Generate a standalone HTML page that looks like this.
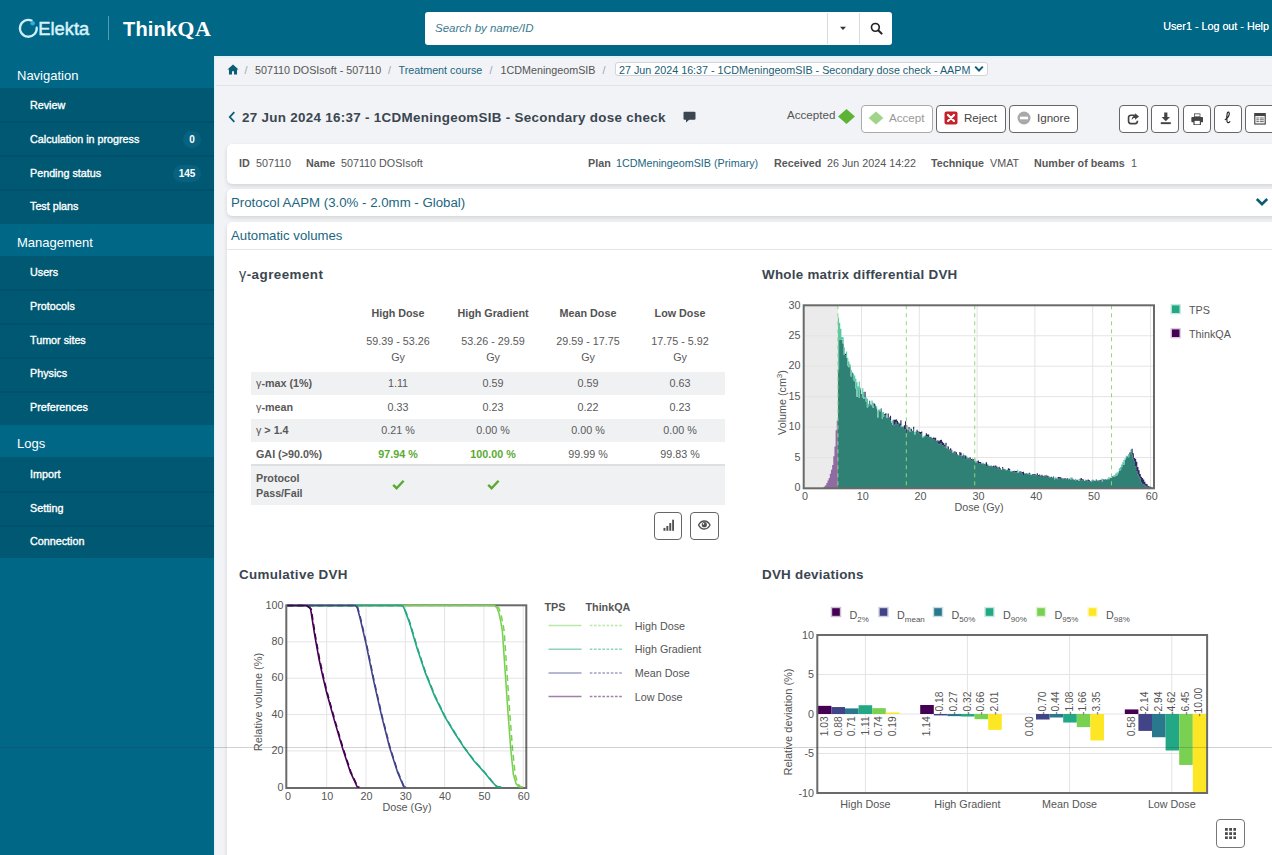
<!DOCTYPE html>
<html lang="en">
<head>
<meta charset="utf-8">
<title>ThinkQA</title>
<style>
*{box-sizing:border-box;margin:0;padding:0}
html,body{width:1272px;height:855px;overflow:hidden;background:#f1f3f6;font-family:"Liberation Sans",sans-serif;}
body{position:relative;color:#444}
.abs{position:absolute}
#hdr{position:absolute;left:0;top:0;width:1272px;height:56px;background:#006787}
#side{position:absolute;left:0;top:56px;width:215px;height:799px;background:#006787}
#main{position:absolute;left:214px;top:55.5px;width:1058px;height:800px;background:#f1f3f6;border-top:2px solid #e1f1f7;border-left:1px solid #dcf1f8}
.sec{position:absolute;left:17px;color:#fff;font-size:13px;line-height:16px;white-space:nowrap}
.grp{position:absolute;left:0;width:214px;background:#005873}
.it{position:absolute;left:30px;color:#fff;font-size:10.75px;line-height:14px;white-space:nowrap;-webkit-text-stroke:.35px #fff}
.sep{position:absolute;left:0;width:214px;height:2px;background:rgba(0,0,0,.06)}
.badge{position:absolute;height:17px;border-radius:9px;background:#07627f;color:#fff;font-size:10px;font-weight:bold;line-height:17px;text-align:center}
.t{position:absolute;white-space:nowrap;line-height:1}
.card{position:absolute;background:#fff;border-radius:5px;box-shadow:0 2px 4px rgba(0,0,0,.13)}
.btn{position:absolute;height:27.5px;border:1px solid #666;border-radius:4px;background:#fff}
.lbl{font-weight:bold;color:#585858}
.val{color:#555}
.link{color:#1a6680}
table{border-collapse:collapse}
</style>
</head>
<body>
<div id="hdr">
  <!-- Elekta logo -->
  <svg class="abs" style="left:18px;top:16px" width="78" height="26" viewBox="0 0 78 26">
    <path d="M13.6 4.6 A8.4 8.4 0 1 0 18.7 11.6" fill="none" stroke="#cdeef8" stroke-width="2.3" stroke-linecap="round"/>
    <circle cx="14.7" cy="7.3" r="2.3" fill="#2aaedb"/>
    <text x="20.2" y="18.5" font-family="Liberation Sans, sans-serif" font-size="17.6" fill="#d9f2fa" stroke="#d9f2fa" stroke-width=".45" textLength="51" lengthAdjust="spacingAndGlyphs">Elekta</text>
  </svg>
  <div class="abs" style="left:108px;top:16px;width:1px;height:24px;background:#5a9db0"></div>
  <div class="t" style="left:123px;top:17.5px;font-size:20px;font-weight:bold;color:#fff;letter-spacing:.2px">Think<span style="font-family:'Liberation Serif',serif;font-size:22px;letter-spacing:.5px">QA</span></div>
  <!-- search -->
  <div class="abs" style="left:425px;top:12px;width:467px;height:33px;background:#fff;border-radius:3px"></div>
  <div class="t" style="left:435px;top:23px;font-size:11.5px;font-style:italic;color:#3b7a90">Search by name/ID</div>
  <div class="abs" style="left:827px;top:13px;width:1px;height:31px;background:#d5dde1"></div>
  <div class="abs" style="left:859px;top:13px;width:1px;height:31px;background:#d5dde1"></div>
  <svg class="abs" style="left:839px;top:26px" width="8" height="5" viewBox="0 0 8 5"><path d="M1 .8h6L4 4z" fill="#333"/></svg>
  <svg class="abs" style="left:869.5px;top:21.5px" width="13" height="13" viewBox="0 0 15 15"><circle cx="6.2" cy="6.2" r="4.5" fill="none" stroke="#222" stroke-width="1.9"/><path d="M9.8 9.8l3.6 3.6" stroke="#222" stroke-width="2.4" stroke-linecap="round"/></svg>
  <div class="t" style="right:3px;top:21px;font-size:10.75px;color:#fff;text-shadow:0 0 .5px rgba(255,255,255,.8)">User1 - Log out - Help</div>
</div>

<div id="side">
  <div class="sec" style="top:11.7px">Navigation</div>
  <div class="grp" style="top:32px;height:136px"></div>
  <div class="sep" style="top:65px"></div><div class="sep" style="top:99px"></div><div class="sep" style="top:133px"></div>
  <div class="it" style="top:41.7px">Review</div>
  <div class="it" style="top:75.7px">Calculation in progress</div>
  <div class="it" style="top:109.7px">Pending status</div>
  <div class="it" style="top:142.7px">Test plans</div>
  <div class="badge" style="left:183px;top:75px;width:18px">0</div>
  <div class="badge" style="left:173px;top:109px;width:28px">145</div>

  <div class="sec" style="top:179.2px">Management</div>
  <div class="grp" style="top:200px;height:169px"></div>
  <div class="sep" style="top:233px"></div><div class="sep" style="top:267px"></div><div class="sep" style="top:301px"></div><div class="sep" style="top:335px"></div>
  <div class="it" style="top:209.2px">Users</div>
  <div class="it" style="top:243.2px">Protocols</div>
  <div class="it" style="top:277.2px">Tumor sites</div>
  <div class="it" style="top:310.2px">Physics</div>
  <div class="it" style="top:344.2px">Preferences</div>

  <div class="sec" style="top:379.8px">Logs</div>
  <div class="grp" style="top:401px;height:101px"></div>
  <div class="sep" style="top:435px"></div><div class="sep" style="top:469px"></div>
  <div class="it" style="top:410.8px">Import</div>
  <div class="it" style="top:444.8px">Setting</div>
  <div class="it" style="top:477.8px">Connection</div>
</div>

<div id="main"></div>

<!-- breadcrumb (absolute page coords) -->
<div class="abs" style="left:216px;top:85px;width:1056px;height:1px;background:#dfe4e8"></div>
<svg class="abs" style="left:227px;top:63.5px" width="12" height="11" viewBox="0 0 13 12"><path d="M6.5 .6 L.4 6h1.7v5.4h3.3V7.8h2.2v3.6h3.3V6h1.7z" fill="#0b5c75"/></svg>
<div class="t bc" style="left:244.5px;top:64.6px;font-size:10.75px;color:#9aa5ad">/</div>
<div class="t bc" style="left:255px;top:64.6px;font-size:10.75px;color:#555">507110 DOSIsoft - 507110</div>
<div class="t bc" style="left:388px;top:64.6px;font-size:10.75px;color:#9aa5ad">/</div>
<div class="t bc" style="left:398.5px;top:64.6px;font-size:10.75px;color:#1a6680">Treatment course</div>
<div class="t bc" style="left:489.5px;top:64.6px;font-size:10.75px;color:#9aa5ad">/</div>
<div class="t bc" style="left:500.5px;top:64.6px;font-size:10.75px;color:#555">1CDMeningeomSIB</div>
<div class="t bc" style="left:602.5px;top:64.6px;font-size:10.75px;color:#9aa5ad">/</div>
<div class="abs" style="left:615px;top:62px;width:373px;height:14px;background:#fff;border:1px solid #cfd5da;border-radius:3px"></div>
<div class="t" style="left:619px;top:64.6px;font-size:10.75px;color:#1a5d75">27 Jun 2024 16:37 - 1CDMeningeomSIB - Secondary dose check - AAPM</div>
<svg class="abs" style="left:974px;top:65px" width="10" height="8" viewBox="0 0 10 8"><path d="M1.2 1.6L5 5.6 8.8 1.6" fill="none" stroke="#0b5c75" stroke-width="2"/></svg>

<!-- title row -->
<svg class="abs" style="left:228px;top:111px" width="8" height="12" viewBox="0 0 8 12"><path d="M6.3 1.2L1.8 6l4.5 4.8" fill="none" stroke="#0b5c75" stroke-width="1.8"/></svg>
<div class="t" id="ttl" style="left:242px;top:111px;font-size:13.4px;font-weight:bold;color:#3b4650;letter-spacing:.3px">27 Jun 2024 16:37 - 1CDMeningeomSIB - Secondary dose check</div>
<svg class="abs" style="left:683px;top:111px" width="13" height="12" viewBox="0 0 13 12"><path d="M1.5 .8h10a1 1 0 0 1 1 1v6a1 1 0 0 1-1 1H6.2L3 11.4V8.8H1.5a1 1 0 0 1-1-1v-6a1 1 0 0 1 1-1z" fill="#3b4650"/></svg>

<div class="t" style="left:787px;top:109.3px;font-size:11.6px;color:#555">Accepted</div>
<svg class="abs" style="left:836.5px;top:107.5px" width="19" height="17" viewBox="0 0 18 16"><path d="M9 .8L17 8 9 15.2 1 8z" fill="#5cb336"/></svg>

<div class="btn" style="left:861px;top:105px;width:72px;border-color:#aaa"></div>
<svg class="abs" style="left:868px;top:111px" width="16" height="14" viewBox="0 0 16 14"><path d="M8 .6L15.4 7 8 13.4 .6 7z" fill="#9fd48a"/></svg>
<div class="t" style="left:889px;top:112px;font-size:11.6px;color:#999">Accept</div>

<div class="btn" style="left:936px;top:105px;width:70px"></div>
<svg class="abs" style="left:944px;top:111px" width="14" height="14" viewBox="0 0 14 14"><rect x=".5" y=".5" width="13" height="13" rx="2" fill="#c8202a"/><path d="M4 4l6 6M10 4l-6 6" stroke="#fff" stroke-width="2.2" stroke-linecap="round"/></svg>
<div class="t" style="left:964px;top:112px;font-size:11.6px;color:#444">Reject</div>

<div class="btn" style="left:1009px;top:105px;width:69px"></div>
<svg class="abs" style="left:1017px;top:111px" width="14" height="14" viewBox="0 0 14 14"><circle cx="7" cy="7" r="6.5" fill="#a9a9a9"/><rect x="3" y="5.7" width="8" height="2.6" fill="#fff"/></svg>
<div class="t" style="left:1037px;top:112px;font-size:11.6px;color:#444">Ignore</div>

<!-- right icon buttons -->
<div class="btn" style="left:1119px;top:105px;width:29px"></div>
<svg class="abs" style="left:1127px;top:113px" width="13" height="12.2" viewBox="0 0 15 14"><path d="M9.2 2.6H4.4a2.6 2.6 0 0 0-2.6 2.6v4.4a2.6 2.6 0 0 0 2.6 2.6h5a2.6 2.6 0 0 0 2.6-2.6V9" fill="none" stroke="#444" stroke-width="1.9"/><path d="M9.3 .4l4.6 3.7-4.6 3.7V5.6C7.4 5.6 6.2 6.3 5.4 8c0-2.9 1.4-4.9 3.9-5.2z" fill="#444"/></svg>
<div class="btn" style="left:1151px;top:105px;width:28px"></div>
<svg class="abs" style="left:1159.6px;top:112.3px" width="11.6" height="13.2" viewBox="0 0 13 15"><path d="M4.7 .6h3.6v5h3L6.5 10.6 1.7 5.6h3z" fill="#444"/><rect x=".8" y="11.6" width="11.4" height="2.2" fill="#444"/></svg>
<div class="btn" style="left:1183px;top:105px;width:28px"></div>
<svg class="abs" style="left:1190.8px;top:112.8px" width="12.4" height="12.4" viewBox="0 0 14 14"><rect x="3.4" y=".5" width="7.2" height="4.4" fill="#444"/><rect x=".4" y="4.4" width="13.2" height="6" rx="1" fill="#444"/><rect x="3.4" y="8.2" width="7.2" height="5.2" fill="#fff" stroke="#444" stroke-width="1.3"/><rect x="4.2" y="1.4" width="5.6" height="2.4" fill="#fff"/></svg>
<div class="btn" style="left:1214px;top:105px;width:28px"></div>
<svg class="abs" style="left:1224px;top:111px" width="8" height="14" viewBox="0 0 8 14"><path d="M1.2 8.6C4 6.6 5.6 3.8 5.2 2 4.9 .7 3.6 .9 3.2 2.4 2.7 4.6 2.6 8.2 3 10.4c.3 1.6 1.6 1.7 2.9 .2" fill="none" stroke="#222" stroke-width="1.1" stroke-linecap="round"/></svg>
<div class="btn" style="left:1245px;top:105px;width:40px"></div>
<svg class="abs" style="left:1253.8px;top:113.2px" width="12" height="11.6" viewBox="0 0 14 14"><rect x=".7" y=".7" width="12.6" height="12.6" fill="#fff" stroke="#444" stroke-width="1.4"/><rect x=".7" y=".7" width="12.6" height="3" fill="#444"/><path d="M2.6 6h3M6.6 6h5M2.6 8.2h3M6.6 8.2h5M2.6 10.4h3M6.6 10.4h5" stroke="#666" stroke-width="1.2"/></svg>

<!-- info card -->
<div class="card" style="left:226.5px;top:144px;width:1060px;height:39.5px"></div>
<div class="t lbl" style="left:239px;top:158px;font-size:10.75px">ID</div>
<div class="t val" style="left:256px;top:158px;font-size:10.75px">507110</div>
<div class="t lbl" style="left:306px;top:158px;font-size:10.75px">Name</div>
<div class="t val" style="left:341px;top:158px;font-size:10.75px">507110 DOSIsoft</div>
<div class="t lbl" style="left:588px;top:158px;font-size:10.75px">Plan</div>
<div class="t link" style="left:616px;top:158px;font-size:10.75px">1CDMeningeomSIB (Primary)</div>
<div class="t lbl" style="left:774px;top:158px;font-size:10.75px">Received</div>
<div class="t val" style="left:827px;top:158px;font-size:10.75px">26 Jun 2024 14:22</div>
<div class="t lbl" style="left:931px;top:158px;font-size:10.75px">Technique</div>
<div class="t val" style="left:990px;top:158px;font-size:10.75px">VMAT</div>
<div class="t lbl" style="left:1034px;top:158px;font-size:10.75px">Number of beams</div>
<div class="t val" style="left:1131px;top:158px;font-size:10.75px">1</div>

<!-- protocol card -->
<div class="card" style="left:226.5px;top:189px;width:1060px;height:27px"></div>
<div class="t link" style="left:231px;top:196px;font-size:13.25px">Protocol AAPM (3.0% - 2.0mm - Global)</div>
<svg class="abs" style="left:1255px;top:197px" width="14" height="10" viewBox="0 0 14 10"><path d="M1.8 2L7 7.2 12.2 2" fill="none" stroke="#0b5c75" stroke-width="2.6"/></svg>

<!-- automatic volumes card -->
<div class="card" style="left:226.5px;top:222px;width:1060px;height:650px"></div>
<div class="t link" style="left:231px;top:229px;font-size:13.2px">Automatic volumes</div>
<div class="abs" style="left:226.5px;top:249px;width:1046px;height:1px;background:#e3e6e9"></div>
<!-- section titles -->
<div class="t ttl" style="left:239px;top:267px;font-size:13.4px;font-weight:bold;color:#3b4650;letter-spacing:.45px"><span style="font-weight:normal;font-size:14.5px">&#947;</span>-agreement</div>
<div class="t ttl" style="left:762px;top:268px;font-size:13.4px;font-weight:bold;color:#3b4650;letter-spacing:.25px">Whole matrix differential DVH</div>
<div class="t ttl" style="left:239px;top:568px;font-size:13.4px;font-weight:bold;color:#3b4650;letter-spacing:.33px">Cumulative DVH</div>
<div class="t ttl" style="left:762px;top:568px;font-size:13.4px;font-weight:bold;color:#3b4650;letter-spacing:.25px">DVH deviations</div>

<!-- gamma table -->
<style>
.gt{position:absolute;left:251px;top:300px;width:474px;font-size:10.75px;color:#5a5a5a}
.gt .row{position:absolute;left:0;width:474px}
.gt .c{position:absolute;width:96px;text-align:center;white-space:nowrap;line-height:13px}
.gt .l{position:absolute;left:5px;white-space:nowrap;line-height:13px;font-weight:bold;color:#585858}
.c1{left:99px}.c2{left:194px}.c3{left:289px}.c4{left:381px}
.hd{font-weight:bold;color:#525252}
.g{color:#5aaa32;font-weight:bold}
</style>
<div class="gt">
  <div class="row" style="top:72px;height:23px;background:#f0f1f3"></div>
  <div class="row" style="top:119px;height:23px;background:#f0f1f3"></div>
  <div class="row" style="top:164px;height:41px;background:#f0f1f3;border-top:2px solid #dddfe2"></div>

  <div class="c c1 hd" style="top:7px">High Dose</div>
  <div class="c c2 hd" style="top:7px">High Gradient</div>
  <div class="c c3 hd" style="top:7px">Mean Dose</div>
  <div class="c c4 hd" style="top:7px">Low Dose</div>

  <div class="c c1" style="top:35px">59.39 - 53.26</div><div class="c c1" style="top:51px">Gy</div>
  <div class="c c2" style="top:35px">53.26 - 29.59</div><div class="c c2" style="top:51px">Gy</div>
  <div class="c c3" style="top:35px">29.59 - 17.75</div><div class="c c3" style="top:51px">Gy</div>
  <div class="c c4" style="top:35px">17.75 - 5.92</div><div class="c c4" style="top:51px">Gy</div>

  <div class="l" style="top:77px"><span style="font-weight:normal">&#947;</span>-max (1%)</div>
  <div class="c c1" style="top:77px">1.11</div><div class="c c2" style="top:77px">0.59</div><div class="c c3" style="top:77px">0.59</div><div class="c c4" style="top:77px">0.63</div>

  <div class="l" style="top:101px"><span style="font-weight:normal">&#947;</span>-mean</div>
  <div class="c c1" style="top:101px">0.33</div><div class="c c2" style="top:101px">0.23</div><div class="c c3" style="top:101px">0.22</div><div class="c c4" style="top:101px">0.23</div>

  <div class="l" style="top:124px"><span style="font-weight:normal">&#947;</span> &gt; 1.4</div>
  <div class="c c1" style="top:124px">0.21 %</div><div class="c c2" style="top:124px">0.00 %</div><div class="c c3" style="top:124px">0.00 %</div><div class="c c4" style="top:124px">0.00 %</div>

  <div class="l" style="top:148px">GAI (&gt;90.0%)</div>
  <div class="c c1 g" style="top:148px">97.94 %</div><div class="c c2 g" style="top:148px">100.00 %</div><div class="c c3" style="top:148px">99.99 %</div><div class="c c4" style="top:148px">99.83 %</div>

  <div class="l" style="top:171.5px">Protocol</div>
  <div class="l" style="top:187px">Pass/Fail</div>
  <svg class="abs" style="left:141px;top:179px" width="13" height="11" viewBox="0 0 13 11"><path d="M1.2 5.8l3.4 3.4 7-7.4" fill="none" stroke="#5aaa32" stroke-width="2.4"/></svg>
  <svg class="abs" style="left:236px;top:179px" width="13" height="11" viewBox="0 0 13 11"><path d="M1.2 5.8l3.4 3.4 7-7.4" fill="none" stroke="#5aaa32" stroke-width="2.4"/></svg>
</div>

<!-- table buttons -->
<div class="btn" style="left:653.5px;top:512px;width:28.5px;height:28px"></div>
<svg class="abs" style="left:662.6px;top:519px" width="11.6" height="12" viewBox="0 0 12 12"><rect x=".5" y="9" width="2" height="3" fill="#505050"/><rect x="3.5" y="7" width="2" height="5" fill="#505050"/><rect x="6.5" y="4" width="2" height="8" fill="#505050"/><rect x="9.5" y=".5" width="2" height="11.5" fill="#505050"/></svg>
<div class="btn" style="left:690px;top:512px;width:29px;height:28px"></div>
<svg class="abs" style="left:698.4px;top:520px" width="12.6" height="10" viewBox="0 0 15 12"><path d="M.6 6C2.4 2.6 4.8 1.2 7.5 1.2S12.6 2.6 14.4 6C12.6 9.4 10.2 10.8 7.5 10.8S2.4 9.4 .6 6z" fill="#fff" stroke="#505050" stroke-width="1.6"/><circle cx="7.5" cy="5.6" r="3.1" fill="#505050"/><circle cx="6.5" cy="4.6" r="1" fill="#fff"/></svg>

<!-- grid button bottom-right -->
<div class="btn" style="left:1216px;top:819.4px;width:28.8px;height:28.3px;border-color:#777"></div>
<svg class="abs" style="left:1224.6px;top:827.9px" width="11.2" height="11.2" viewBox="0 0 12 12"><g fill="#4a4a4a"><rect x="0" y="0" width="3" height="3"/><rect x="4.5" y="0" width="3" height="3"/><rect x="9" y="0" width="3" height="3"/><rect x="0" y="4.5" width="3" height="3"/><rect x="4.5" y="4.5" width="3" height="3"/><rect x="9" y="4.5" width="3" height="3"/><rect x="0" y="9" width="3" height="3"/><rect x="4.5" y="9" width="3" height="3"/><rect x="9" y="9" width="3" height="3"/></g></svg>
<svg class="abs" style="left:0;top:0" width="1272" height="855" viewBox="0 0 1272 855">
<rect x="803.7" y="305.3" width="350.29999999999995" height="183.0" fill="#fff"/>
<rect x="803.7" y="305.3" width="34.22" height="183.0" fill="#ebebeb"/>
<line x1="861.5" y1="305.3" x2="861.5" y2="488.3" stroke="#e4e4e4" stroke-width="1"/>
<line x1="919.3" y1="305.3" x2="919.3" y2="488.3" stroke="#e4e4e4" stroke-width="1"/>
<line x1="977.1" y1="305.3" x2="977.1" y2="488.3" stroke="#e4e4e4" stroke-width="1"/>
<line x1="1034.9" y1="305.3" x2="1034.9" y2="488.3" stroke="#e4e4e4" stroke-width="1"/>
<line x1="1092.7" y1="305.3" x2="1092.7" y2="488.3" stroke="#e4e4e4" stroke-width="1"/>
<line x1="1150.5" y1="305.3" x2="1150.5" y2="488.3" stroke="#e4e4e4" stroke-width="1"/>
<line x1="803.7" y1="457.55" x2="1154.0" y2="457.55" stroke="#e4e4e4" stroke-width="1"/>
<line x1="803.7" y1="427.1" x2="1154.0" y2="427.1" stroke="#e4e4e4" stroke-width="1"/>
<line x1="803.7" y1="396.65" x2="1154.0" y2="396.65" stroke="#e4e4e4" stroke-width="1"/>
<line x1="803.7" y1="366.2" x2="1154.0" y2="366.2" stroke="#e4e4e4" stroke-width="1"/>
<line x1="803.7" y1="335.75" x2="1154.0" y2="335.75" stroke="#e4e4e4" stroke-width="1"/>
<path d="M837.92 488V369.6H839.07V488zM839.07 488V339.68H840.23V488zM840.23 488V340.11H841.39V488zM841.39 488V339.47H842.54V488zM842.54 488V343.61H843.7V488zM843.7 488V354.74H844.85V488zM844.85 488V355.33H846.01V488zM846.01 488V357.51H847.17V488zM847.17 488V365.82H848.32V488zM848.32 488V367.3H849.48V488zM849.48 488V366.24H850.63V488zM850.63 488V376.6H851.79V488zM851.79 488V372.82H852.95V488zM852.95 488V380.28H854.1V488zM854.1 488V381.37H855.26V488zM855.26 488V388.56H856.41V488zM856.41 488V397H857.57V488zM857.57 488V390.04H858.73V488zM858.73 488V398.1H859.88V488zM859.88 488V390.08H861.04V488zM861.04 488V394.53H862.19V488zM862.19 488V397.57H863.35V488zM863.35 488V398.68H864.51V488zM864.51 488V396.91H865.66V488zM865.66 488V401.5H866.82V488zM866.82 488V407.41H867.97V488zM867.97 488V406.36H869.13V488zM869.13 488V400.99H870.29V488zM870.29 488V404.52H871.44V488zM871.44 488V405.44H872.6V488zM872.6 488V407.67H873.75V488zM873.75 488V406.13H874.91V488zM874.91 488V405.48H876.07V488zM876.07 488V408.24H877.22V488zM877.22 488V417.43H878.38V488zM878.38 488V409.89H879.53V488zM879.53 488V411.16H880.69V488zM880.69 488V409.17H881.85V488zM881.85 488V418.67H883V488zM883 488V416.42H884.16V488zM884.16 488V414.9H885.31V488zM885.31 488V414.96H886.47V488zM886.47 488V418.26H887.63V488zM887.63 488V417.84H888.78V488zM888.78 488V417.34H889.94V488zM889.94 488V420.29H891.09V488zM891.09 488V422.71H892.25V488zM892.25 488V425.1H893.41V488zM893.41 488V425.39H894.56V488zM894.56 488V424.48H895.72V488zM895.72 488V421.95H896.87V488zM896.87 488V424.47H898.03V488zM898.03 488V422.98H899.19V488zM899.19 488V427.15H900.34V488zM900.34 488V425.33H901.5V488zM901.5 488V427.07H902.65V488zM902.65 488V426.7H903.81V488zM903.81 488V428.91H904.97V488zM904.97 488V429.61H906.12V488zM906.12 488V433.52H907.28V488zM907.28 488V429.79H908.43V488zM908.43 488V429.29H909.59V488zM909.59 488V431.58H910.75V488zM910.75 488V431.45H911.9V488zM911.9 488V430.8H913.06V488zM913.06 488V429.6H914.21V488zM914.21 488V434.46H915.37V488zM915.37 488V431.6H916.53V488zM916.53 488V431.89H917.68V488zM917.68 488V432.25H918.84V488zM918.84 488V433.15H919.99V488zM919.99 488V434.44H921.15V488zM921.15 488V433.02H922.31V488zM922.31 488V437.4H923.46V488zM923.46 488V436.55H924.62V488zM924.62 488V435.68H925.77V488zM925.77 488V436.04H926.93V488zM926.93 488V436.12H928.09V488zM928.09 488V437.49H929.24V488zM929.24 488V437.02H930.4V488zM930.4 488V437.03H931.55V488zM931.55 488V438.3H932.71V488zM932.71 488V439H933.87V488zM933.87 488V439.6H935.02V488zM935.02 488V440.63H936.18V488zM936.18 488V440.92H937.33V488zM937.33 488V443.67H938.49V488zM938.49 488V444.5H939.65V488zM939.65 488V443.75H940.8V488zM940.8 488V443.1H941.96V488zM941.96 488V445.26H943.11V488zM943.11 488V445.72H944.27V488zM944.27 488V447.55H945.43V488zM945.43 488V445.42H946.58V488zM946.58 488V448.31H947.74V488zM947.74 488V449.1H948.89V488zM948.89 488V450.5H950.05V488zM950.05 488V450.44H951.21V488zM951.21 488V450.53H952.36V488zM952.36 488V454.07H953.52V488zM953.52 488V452.85H954.67V488zM954.67 488V452.57H955.83V488zM955.83 488V454.09H956.99V488zM956.99 488V454.39H958.14V488zM958.14 488V455.33H959.3V488zM959.3 488V455.04H960.45V488zM960.45 488V455.62H961.61V488zM961.61 488V457.93H962.77V488zM962.77 488V455.03H963.92V488zM963.92 488V456.34H965.08V488zM965.08 488V459.19H966.23V488zM966.23 488V456.86H967.39V488zM967.39 488V458.27H968.55V488zM968.55 488V457.93H969.7V488zM969.7 488V459.57H970.86V488zM970.86 488V460.6H972.01V488zM972.01 488V459.6H973.17V488zM973.17 488V459.75H974.33V488zM974.33 488V460.88H975.48V488zM975.48 488V462.59H976.64V488zM976.64 488V461.36H977.79V488zM977.79 488V463.69H978.95V488zM978.95 488V463.53H980.11V488zM980.11 488V463.75H981.26V488zM981.26 488V463.8H982.42V488zM982.42 488V462.73H983.57V488zM983.57 488V464.75H984.73V488zM984.73 488V463.8H985.89V488zM985.89 488V466.02H987.04V488zM987.04 488V464.76H988.2V488zM988.2 488V466.11H989.35V488zM989.35 488V467.04H990.51V488zM990.51 488V465.5H991.67V488zM991.67 488V466.36H992.82V488zM992.82 488V467.09H993.98V488zM993.98 488V466.15H995.13V488zM995.13 488V467.75H996.29V488zM996.29 488V467.91H997.45V488zM997.45 488V467.97H998.6V488zM998.6 488V469.29H999.76V488zM999.76 488V468.48H1000.91V488zM1000.91 488V470H1002.07V488zM1002.07 488V468.56H1003.23V488zM1003.23 488V468.65H1004.38V488zM1004.38 488V470.01H1005.54V488zM1005.54 488V470.35H1006.69V488zM1006.69 488V469.82H1007.85V488zM1007.85 488V469.96H1009.01V488zM1009.01 488V470.35H1010.16V488zM1010.16 488V471.17H1011.32V488zM1011.32 488V471.53H1012.47V488zM1012.47 488V471.97H1013.63V488zM1013.63 488V471.45H1014.79V488zM1014.79 488V472.43H1015.94V488zM1015.94 488V472.46H1017.1V488zM1017.1 488V472.4H1018.25V488zM1018.25 488V472.56H1019.41V488zM1019.41 488V473.05H1020.57V488zM1020.57 488V471.64H1021.72V488zM1021.72 488V473.84H1022.88V488zM1022.88 488V475.06H1024.03V488zM1024.03 488V473.31H1025.19V488zM1025.19 488V473.67H1026.35V488zM1026.35 488V473.31H1027.5V488zM1027.5 488V474.29H1028.66V488zM1028.66 488V474.4H1029.81V488zM1029.81 488V474.42H1030.97V488zM1030.97 488V475.02H1032.13V488zM1032.13 488V474.7H1033.28V488zM1033.28 488V475.27H1034.44V488zM1034.44 488V475.54H1035.59V488zM1035.59 488V475.04H1036.75V488zM1036.75 488V475.18H1037.91V488zM1037.91 488V475.89H1039.06V488zM1039.06 488V475.77H1040.22V488zM1040.22 488V475.45H1041.37V488zM1041.37 488V477.09H1042.53V488zM1042.53 488V476.96H1043.69V488zM1043.69 488V476.18H1044.84V488zM1044.84 488V475.56H1046V488zM1046 488V475.18H1047.15V488zM1047.15 488V476.98H1048.31V488zM1048.31 488V477.31H1049.47V488zM1049.47 488V477.37H1050.62V488zM1050.62 488V478.06H1051.78V488zM1051.78 488V477.83H1052.93V488zM1052.93 488V477.24H1054.09V488zM1054.09 488V479.37H1055.25V488zM1055.25 488V477.51H1056.4V488zM1056.4 488V478.85H1057.56V488zM1057.56 488V479.44H1058.71V488zM1058.71 488V478H1059.87V488zM1059.87 488V478.78H1061.03V488zM1061.03 488V477.97H1062.18V488zM1062.18 488V479.2H1063.34V488zM1063.34 488V478.31H1064.49V488zM1064.49 488V478.83H1065.65V488zM1065.65 488V479.27H1066.81V488zM1066.81 488V479.65H1067.96V488zM1067.96 488V479.28H1069.12V488zM1069.12 488V479.09H1070.27V488zM1070.27 488V479.57H1071.43V488zM1071.43 488V478.53H1072.59V488zM1072.59 488V479.73H1073.74V488zM1073.74 488V479.7H1074.9V488zM1074.9 488V480.23H1076.05V488zM1076.05 488V479.99H1077.21V488zM1077.21 488V479.72H1078.37V488zM1078.37 488V480.98H1079.52V488zM1079.52 488V479.58H1080.68V488zM1080.68 488V480.3H1081.83V488zM1081.83 488V480.34H1082.99V488zM1082.99 488V480.84H1084.15V488zM1084.15 488V480.99H1085.3V488zM1085.3 488V480.47H1086.46V488zM1086.46 488V480.26H1087.61V488zM1087.61 488V481.75H1088.77V488zM1088.77 488V480.63H1089.93V488zM1089.93 488V481.16H1091.08V488zM1091.08 488V481.51H1092.24V488zM1092.24 488V480.31H1093.39V488zM1093.39 488V480.53H1094.55V488zM1094.55 488V480.78H1095.71V488zM1095.71 488V479.91H1096.86V488zM1096.86 488V480.48H1098.02V488zM1098.02 488V481.5H1099.17V488zM1099.17 488V480.22H1100.33V488zM1100.33 488V481.9H1101.49V488zM1101.49 488V481.39H1102.64V488zM1102.64 488V479.87H1103.8V488zM1103.8 488V479.74H1104.95V488zM1104.95 488V479.68H1106.11V488zM1106.11 488V479.86H1107.27V488zM1107.27 488V479.02H1108.42V488zM1108.42 488V479.24H1109.58V488zM1109.58 488V477.92H1110.73V488zM1110.73 488V477.81H1111.89V488zM1111.89 488V477.43H1113.05V488zM1113.05 488V477.08H1114.2V488zM1114.2 488V476.58H1115.36V488zM1115.36 488V475.91H1116.51V488zM1116.51 488V475.16H1117.67V488zM1117.67 488V473.18H1118.83V488zM1118.83 488V471.12H1119.98V488zM1119.98 488V470.35H1121.14V488zM1121.14 488V467.15H1122.29V488zM1122.29 488V464.92H1123.45V488zM1123.45 488V464.57H1124.61V488zM1124.61 488V460.07H1125.76V488zM1125.76 488V457.46H1126.92V488zM1126.92 488V457.1H1128.07V488zM1128.07 488V457.26H1129.23V488zM1129.23 488V453.83H1130.39V488zM1130.39 488V451.82H1131.54V488zM1131.54 488V454.42H1132.7V488zM1132.7 488V458.68H1133.85V488zM1133.85 488V461.53H1135.01V488zM1135.01 488V466.3H1136.17V488zM1136.17 488V471.27H1137.32V488zM1137.32 488V474.59H1138.48V488zM1138.48 488V476.75H1139.63V488zM1139.63 488V478.53H1140.79V488zM1140.79 488V482.37H1141.95V488zM1141.95 488V483.76H1143.1V488zM1143.1 488V484.27H1144.26V488zM1144.26 488V485.14H1145.41V488zM1145.41 488V486.35H1146.57V488zM1146.57 488V486.82H1147.73V488zM1147.73 488V487.38H1148.88V488zM1148.88 488V487.63H1150.04V488zM1150.04 488V487.83H1151.19V488z" fill="#2f8176"/>
<path d="M837.92 369.6V317.48H839.07V369.6zM839.07 339.68V322.85H840.23V339.68zM840.23 340.11V328.68H841.39V340.11zM841.39 339.47V336.95H842.54V339.47zM842.54 343.61V337.34H843.7V343.61zM843.7 354.74V347.24H844.85V354.74zM846.01 357.51V351.61H847.17V357.51zM847.17 365.82V357.66H848.32V365.82zM848.32 367.3V361.61H849.48V367.3zM849.48 366.24V364.32H850.63V366.24zM850.63 376.6V369.77H851.79V376.6zM851.79 372.82V372.29H852.95V372.82zM852.95 380.28V373.57H854.1V380.28zM854.1 381.37V375.5H855.26V381.37zM855.26 388.56V378.78H856.41V388.56zM856.41 397V382.25H857.57V397zM857.57 390.04V386.46H858.73V390.04zM858.73 398.1V381.6H859.88V398.1zM859.88 390.08V387.63H861.04V390.08zM862.19 397.57V388.13H863.35V397.57zM863.35 398.68V392.03H864.51V398.68zM865.66 401.5V397.53H866.82V401.5zM866.82 407.41V398.63H867.97V407.41zM867.97 406.36V403.77H869.13V406.36zM869.13 400.99V400.47H870.29V400.99zM871.44 405.44V400.53H872.6V405.44zM872.6 407.67V402.43H873.75V407.67zM874.91 405.48V404.25H876.07V405.48zM876.07 408.24V406.23H877.22V408.24zM877.22 417.43V410.51H878.38V417.43zM878.38 409.89V409.38H879.53V409.89zM879.53 411.16V408.92H880.69V411.16zM881.85 418.67V412.19H883V418.67zM883 416.42V411.95H884.16V416.42zM888.78 417.34V417.13H889.94V417.34zM891.09 422.71V421.2H892.25V422.71zM892.25 425.1V419.71H893.41V425.1zM901.5 427.07V425.68H902.65V427.07zM902.65 426.7V426.51H903.81V426.7zM907.28 429.79V429.13H908.43V429.79zM909.59 431.58V428.33H910.75V431.58zM911.9 430.8V430.65H913.06V430.8zM914.21 434.46V432.09H915.37V434.46zM915.37 431.6V431.57H916.53V431.6zM922.31 437.4V436.47H923.46V437.4zM923.46 436.55V436.36H924.62V436.55zM924.62 435.68V434.93H925.77V435.68zM929.24 437.02V437.01H930.4V437.02zM930.4 437.03V436.38H931.55V437.03zM946.58 448.31V446.04H947.74V448.31zM958.14 455.33V455.09H959.3V455.33zM962.77 455.03V453.59H963.92V455.03zM966.23 456.86V456.23H967.39V456.86zM967.39 458.27V458.25H968.55V458.27zM968.55 457.93V457.12H969.7V457.93zM974.33 460.88V458.62H975.48V460.88zM975.48 462.59V460.87H976.64V462.59zM981.26 463.8V463.36H982.42V463.8zM982.42 462.73V462.69H983.57V462.73zM984.73 463.8V462.66H985.89V463.8zM988.2 466.11V464.75H989.35V466.11zM990.51 465.5V465.3H991.67V465.5zM991.67 466.36V466.3H992.82V466.36zM997.45 467.97V466.97H998.6V467.97zM1003.23 468.65V468.55H1004.38V468.65zM1005.54 470.35V469.76H1006.69V470.35zM1010.16 471.17V470.78H1011.32V471.17zM1011.32 471.53V470.72H1012.47V471.53zM1017.1 472.4V469.87H1018.25V472.4zM1018.25 472.56V471.74H1019.41V472.56zM1024.03 473.31V472.89H1025.19V473.31zM1029.81 474.42V473.29H1030.97V474.42zM1030.97 475.02V474.45H1032.13V475.02zM1035.59 475.04V474.41H1036.75V475.04zM1040.22 475.45V475.33H1041.37V475.45zM1046 475.18V474.69H1047.15V475.18zM1054.09 479.37V477.52H1055.25V479.37zM1055.25 477.51V477.39H1056.4V477.51zM1056.4 478.85V478.49H1057.56V478.85zM1061.03 477.97V477.6H1062.18V477.97zM1063.34 478.31V478.13H1064.49V478.31zM1067.96 479.28V478.52H1069.12V479.28zM1069.12 479.09V478.38H1070.27V479.09zM1070.27 479.57V477.61H1071.43V479.57zM1073.74 479.7V479.65H1074.9V479.7zM1074.9 480.23V478.66H1076.05V480.23zM1076.05 479.99V479.61H1077.21V479.99zM1077.21 479.72V479.71H1078.37V479.72zM1078.37 480.98V479.28H1079.52V480.98zM1084.15 480.99V480.85H1085.3V480.99zM1091.08 481.51V480.34H1092.24V481.51zM1094.55 480.78V480.78H1095.71V480.78zM1096.86 480.48V480.25H1098.02V480.48zM1101.49 481.39V478.57H1102.64V481.39zM1106.11 479.86V479.11H1107.27V479.86zM1107.27 479.02V478.54H1108.42V479.02zM1108.42 479.24V477.1H1109.58V479.24zM1109.58 477.92V477.67H1110.73V477.92zM1110.73 477.81V477.55H1111.89V477.81zM1113.05 477.08V475.43H1114.2V477.08zM1114.2 476.58V475.09H1115.36V476.58zM1115.36 475.91V473.14H1116.51V475.91zM1116.51 475.16V472.59H1117.67V475.16zM1117.67 473.18V471.77H1118.83V473.18zM1118.83 471.12V468.22H1119.98V471.12zM1119.98 470.35V467.04H1121.14V470.35zM1121.14 467.15V464.43H1122.29V467.15zM1122.29 464.92V462.31H1123.45V464.92zM1123.45 464.57V460.01H1124.61V464.57zM1124.61 460.07V458.29H1125.76V460.07zM1125.76 457.46V455.83H1126.92V457.46zM1126.92 457.1V455.86H1128.07V457.1zM1128.07 457.26V453.91H1129.23V457.26zM1130.39 451.82V449.38H1131.54V451.82z" fill="#5cc7a6"/>
<path d="M822.89 488V487.41H824.05V488zM824.05 488V486.42H825.2V488zM825.2 488V485.36H826.36V488zM826.36 488V482.91H827.51V488zM827.51 488V480.49H828.67V488zM828.67 488V478H829.83V488zM829.83 488V473.71H830.98V488zM830.98 488V469.66H832.14V488zM832.14 488V464.97H833.29V488zM833.29 488V456.28H834.45V488zM834.45 488V446.41H835.61V488zM835.61 488V430.13H836.76V488zM836.76 488V420.54H837.92V488z" fill="#8f6ba1"/>
<path d="M844.85 355.33V353.77H846.01V355.33zM861.04 394.53V393.94H862.19V394.53zM864.51 396.91V391.8H865.66V396.91zM870.29 404.52V404.45H871.44V404.52zM873.75 406.13V403.46H874.91V406.13zM880.69 409.17V408.53H881.85V409.17zM884.16 414.9V414.07H885.31V414.9zM885.31 414.96V413.31H886.47V414.96zM886.47 418.26V417.71H887.63V418.26zM887.63 417.84V413.5H888.78V417.84zM889.94 420.29V415.83H891.09V420.29zM893.41 425.39V419.82H894.56V425.39zM894.56 424.48V419.66H895.72V424.48zM895.72 421.95V419.3H896.87V421.95zM896.87 424.47V420.82H898.03V424.47zM898.03 422.98V422.51H899.19V422.98zM899.19 427.15V423.48H900.34V427.15zM900.34 425.33V420.17H901.5V425.33zM903.81 428.91V425.26H904.97V428.91zM904.97 429.61V421.22H906.12V429.61zM906.12 433.52V425.37H907.28V433.52zM908.43 429.29V427.11H909.59V429.29zM910.75 431.45V428.64H911.9V431.45zM913.06 429.6V426.86H914.21V429.6zM916.53 431.89V429.76H917.68V431.89zM917.68 432.25V431.41H918.84V432.25zM918.84 433.15V431.64H919.99V433.15zM919.99 434.44V432.01H921.15V434.44zM921.15 433.02V431.52H922.31V433.02zM925.77 436.04V433.19H926.93V436.04zM926.93 436.12V434.62H928.09V436.12zM928.09 437.49V434.6H929.24V437.49zM931.55 438.3V438H932.71V438.3zM932.71 439V437.47H933.87V439zM933.87 439.6V437.65H935.02V439.6zM935.02 440.63V437.65H936.18V440.63zM936.18 440.92V440.73H937.33V440.92zM937.33 443.67V440.34H938.49V443.67zM938.49 444.5V441.2H939.65V444.5zM939.65 443.75V440.05H940.8V443.75zM940.8 443.1V439.72H941.96V443.1zM941.96 445.26V441.86H943.11V445.26zM943.11 445.72V443.04H944.27V445.72zM944.27 447.55V444.69H945.43V447.55zM945.43 445.42V442.8H946.58V445.42zM947.74 449.1V446.47H948.89V449.1zM948.89 450.5V449.49H950.05V450.5zM950.05 450.44V448.25H951.21V450.44zM951.21 450.53V449.84H952.36V450.53zM952.36 454.07V452.84H953.52V454.07zM953.52 452.85V451.5H954.67V452.85zM954.67 452.57V451.53H955.83V452.57zM955.83 454.09V452.29H956.99V454.09zM956.99 454.39V454.26H958.14V454.39zM959.3 455.04V452.1H960.45V455.04zM960.45 455.62V452.81H961.61V455.62zM961.61 457.93V455.78H962.77V457.93zM963.92 456.34V455.56H965.08V456.34zM965.08 459.19V455.57H966.23V459.19zM969.7 459.57V457.47H970.86V459.57zM970.86 460.6V458.92H972.01V460.6zM972.01 459.6V458.7H973.17V459.6zM973.17 459.75V458.99H974.33V459.75zM976.64 461.36V461.01H977.79V461.36zM977.79 463.69V460.59H978.95V463.69zM978.95 463.53V462.06H980.11V463.53zM980.11 463.75V462.09H981.26V463.75zM983.57 464.75V464.02H984.73V464.75zM985.89 466.02V462.25H987.04V466.02zM987.04 464.76V464.57H988.2V464.76zM989.35 467.04V465.89H990.51V467.04zM992.82 467.09V465.84H993.98V467.09zM993.98 466.15V465.81H995.13V466.15zM995.13 467.75V465.58H996.29V467.75zM996.29 467.91V466.39H997.45V467.91zM998.6 469.29V466.81H999.76V469.29zM999.76 468.48V467.95H1000.91V468.48zM1000.91 470V469.68H1002.07V470zM1002.07 468.56V467.12H1003.23V468.56zM1004.38 470.01V469.37H1005.54V470.01zM1006.69 469.82V469.7H1007.85V469.82zM1007.85 469.96V468.2H1009.01V469.96zM1009.01 470.35V468.82H1010.16V470.35zM1012.47 471.97V470.95H1013.63V471.97zM1013.63 471.45V470.69H1014.79V471.45zM1014.79 472.43V470.91H1015.94V472.43zM1015.94 472.46V470.96H1017.1V472.46zM1019.41 473.05V471.32H1020.57V473.05zM1020.57 471.64V471.58H1021.72V471.64zM1021.72 473.84V471.93H1022.88V473.84zM1022.88 475.06V471.75H1024.03V475.06zM1025.19 473.67V473.45H1026.35V473.67zM1026.35 473.31V473.1H1027.5V473.31zM1027.5 474.29V473.97H1028.66V474.29zM1028.66 474.4V472.76H1029.81V474.4zM1032.13 474.7V474.01H1033.28V474.7zM1033.28 475.27V474.15H1034.44V475.27zM1034.44 475.54V473.91H1035.59V475.54zM1036.75 475.18V473.35H1037.91V475.18zM1037.91 475.89V474.91H1039.06V475.89zM1039.06 475.77V474.57H1040.22V475.77zM1041.37 477.09V474.8H1042.53V477.09zM1042.53 476.96V476.24H1043.69V476.96zM1043.69 476.18V475.44H1044.84V476.18zM1044.84 475.56V475.15H1046V475.56zM1047.15 476.98V475.69H1048.31V476.98zM1048.31 477.31V476.55H1049.47V477.31zM1049.47 477.37V477.13H1050.62V477.37zM1050.62 478.06V476.67H1051.78V478.06zM1051.78 477.83V477.42H1052.93V477.83zM1052.93 477.24V476.44H1054.09V477.24zM1057.56 479.44V477.01H1058.71V479.44zM1058.71 478V477.02H1059.87V478zM1059.87 478.78V477.36H1061.03V478.78zM1062.18 479.2V478.57H1063.34V479.2zM1064.49 478.83V478.04H1065.65V478.83zM1065.65 479.27V478.86H1066.81V479.27zM1066.81 479.65V478.29H1067.96V479.65zM1071.43 478.53V477.77H1072.59V478.53zM1072.59 479.73V479.34H1073.74V479.73zM1079.52 479.58V478.85H1080.68V479.58zM1080.68 480.3V478.03H1081.83V480.3zM1081.83 480.34V479.34H1082.99V480.34zM1082.99 480.84V479.41H1084.15V480.84zM1085.3 480.47V479.81H1086.46V480.47zM1086.46 480.26V479.99H1087.61V480.26zM1087.61 481.75V479.41H1088.77V481.75zM1088.77 480.63V480.03H1089.93V480.63zM1089.93 481.16V480.94H1091.08V481.16zM1092.24 480.31V479.73H1093.39V480.31zM1093.39 480.53V480.43H1094.55V480.53zM1095.71 479.91V479.46H1096.86V479.91zM1098.02 481.5V480.45H1099.17V481.5zM1099.17 480.22V480.05H1100.33V480.22zM1100.33 481.9V479.68H1101.49V481.9zM1102.64 479.87V479.31H1103.8V479.87zM1103.8 479.74V479.4H1104.95V479.74zM1104.95 479.68V479.16H1106.11V479.68zM1111.89 477.43V476.56H1113.05V477.43zM1129.23 453.83V452.62H1130.39V453.83zM1131.54 454.42V448.86H1132.7V454.42zM1132.7 458.68V453.26H1133.85V458.68zM1133.85 461.53V457.94H1135.01V461.53zM1135.01 466.3V458.7H1136.17V466.3zM1136.17 471.27V461.83H1137.32V471.27zM1137.32 474.59V467.11H1138.48V474.59zM1138.48 476.75V470.15H1139.63V476.75zM1139.63 478.53V473.93H1140.79V478.53zM1140.79 482.37V476.65H1141.95V482.37zM1141.95 483.76V478.08H1143.1V483.76zM1143.1 484.27V479.55H1144.26V484.27zM1144.26 485.14V481.63H1145.41V485.14zM1145.41 486.35V483.83H1146.57V486.35zM1146.57 486.82V484.22H1147.73V486.82zM1147.73 487.38V486.11H1148.88V487.38zM1148.88 487.63V486.38H1150.04V487.63zM1150.04 487.83V486.83H1151.19V487.83zM1151.19 488V487.49H1152.35V488z" fill="#2c2a60"/>
<line x1="837.92" y1="305.3" x2="837.92" y2="488.3" stroke="#8fd67a" stroke-width="1" stroke-dasharray="4 4"/>
<line x1="906.3" y1="305.3" x2="906.3" y2="488.3" stroke="#8fd67a" stroke-width="1" stroke-dasharray="4 4"/>
<line x1="974.73" y1="305.3" x2="974.73" y2="488.3" stroke="#8fd67a" stroke-width="1" stroke-dasharray="4 4"/>
<line x1="1111.54" y1="305.3" x2="1111.54" y2="488.3" stroke="#8fd67a" stroke-width="1" stroke-dasharray="4 4"/>
<rect x="803.7" y="305.3" width="350.29999999999995" height="183.0" fill="none" stroke="#6a6a6a" stroke-width="2"/>
<text x="805" y="499.5" font-size="10.75" fill="#555" text-anchor="middle" font-family="Liberation Sans, sans-serif">0</text>
<text x="862.8" y="499.5" font-size="10.75" fill="#555" text-anchor="middle" font-family="Liberation Sans, sans-serif">10</text>
<text x="920.6" y="499.5" font-size="10.75" fill="#555" text-anchor="middle" font-family="Liberation Sans, sans-serif">20</text>
<text x="978.4" y="499.5" font-size="10.75" fill="#555" text-anchor="middle" font-family="Liberation Sans, sans-serif">30</text>
<text x="1036.2" y="499.5" font-size="10.75" fill="#555" text-anchor="middle" font-family="Liberation Sans, sans-serif">40</text>
<text x="1094" y="499.5" font-size="10.75" fill="#555" text-anchor="middle" font-family="Liberation Sans, sans-serif">50</text>
<text x="1151.8" y="499.5" font-size="10.75" fill="#555" text-anchor="middle" font-family="Liberation Sans, sans-serif">60</text>
<text x="800.5" y="491.2" font-size="10.75" fill="#555" text-anchor="end" font-family="Liberation Sans, sans-serif">0</text>
<text x="800.5" y="460.75" font-size="10.75" fill="#555" text-anchor="end" font-family="Liberation Sans, sans-serif">5</text>
<text x="800.5" y="430.3" font-size="10.75" fill="#555" text-anchor="end" font-family="Liberation Sans, sans-serif">10</text>
<text x="800.5" y="399.85" font-size="10.75" fill="#555" text-anchor="end" font-family="Liberation Sans, sans-serif">15</text>
<text x="800.5" y="369.4" font-size="10.75" fill="#555" text-anchor="end" font-family="Liberation Sans, sans-serif">20</text>
<text x="800.5" y="338.95" font-size="10.75" fill="#555" text-anchor="end" font-family="Liberation Sans, sans-serif">25</text>
<text x="800.5" y="308.5" font-size="10.75" fill="#555" text-anchor="end" font-family="Liberation Sans, sans-serif">30</text>
<text x="979" y="511" font-size="10.75" fill="#555" text-anchor="middle" font-family="Liberation Sans, sans-serif">Dose (Gy)</text>
<text transform="translate(786,402.5) rotate(-90)" font-size="10.75" fill="#555" text-anchor="middle" font-family="Liberation Sans, sans-serif">Volume (cm<tspan dy="-4" font-size="8">3</tspan><tspan dy="4">)</tspan></text>
<rect x="1170.5" y="304" width="10.4" height="10.4" fill="#c4eadc"/><rect x="1171.9" y="305.4" width="7.6" height="7.6" fill="#22a884"/>
<text x="1189" y="314" font-size="10.75" fill="#555" font-family="Liberation Sans, sans-serif">TPS</text>
<rect x="1170.5" y="328" width="10.4" height="10.4" fill="#dccbe2"/><rect x="1171.9" y="329.4" width="7.6" height="7.6" fill="#440154"/>
<text x="1189" y="338" font-size="10.75" fill="#555" font-family="Liberation Sans, sans-serif">ThinkQA</text>
<rect x="286.3" y="605.3" width="240" height="182.7" fill="#fff"/>
<line x1="326.7" y1="605.3" x2="326.7" y2="788.0" stroke="#e4e4e4" stroke-width="1"/>
<line x1="366" y1="605.3" x2="366" y2="788.0" stroke="#e4e4e4" stroke-width="1"/>
<line x1="405.3" y1="605.3" x2="405.3" y2="788.0" stroke="#e4e4e4" stroke-width="1"/>
<line x1="444.6" y1="605.3" x2="444.6" y2="788.0" stroke="#e4e4e4" stroke-width="1"/>
<line x1="483.9" y1="605.3" x2="483.9" y2="788.0" stroke="#e4e4e4" stroke-width="1"/>
<line x1="523.2" y1="605.3" x2="523.2" y2="788.0" stroke="#e4e4e4" stroke-width="1"/>
<line x1="286.3" y1="750.94" x2="526.3" y2="750.94" stroke="#e4e4e4" stroke-width="1"/>
<line x1="286.3" y1="714.58" x2="526.3" y2="714.58" stroke="#e4e4e4" stroke-width="1"/>
<line x1="286.3" y1="678.22" x2="526.3" y2="678.22" stroke="#e4e4e4" stroke-width="1"/>
<line x1="286.3" y1="641.86" x2="526.3" y2="641.86" stroke="#e4e4e4" stroke-width="1"/>
<rect x="286.3" y="605.3" width="240" height="182.7" fill="none" stroke="#6a6a6a" stroke-width="2"/>
<clipPath id="c2clip"><rect x="286.3" y="604.3" width="239" height="184.7"/></clipPath>
<g clip-path="url(#c2clip)">
<path d="M287.4 605.5L494.12 605.5L498.48 607.32L500.6 612.77L502.57 621.86L504.14 630.95L506.89 670.95L509.64 710.94L512.39 747.3L515.14 774.57L517.89 783.66L520.25 786.57L523.4 787.3" fill="none" stroke="#7ad151" stroke-width="1.5" stroke-dasharray="6 4" stroke-linejoin="round"/>
<path d="M287.4 605.5L494.12 605.5L496.71 607.32L498.83 612.77L500.8 621.86L502.37 630.95L505.12 670.95L507.87 710.94L510.62 747.3L513.38 774.57L516.13 783.66L518.48 786.57L521.63 787.3" fill="none" stroke="#7ad151" stroke-width="1.6" stroke-linejoin="round"/>
<path d="M287.4 605.5L402.16 605.5L404.16 607.32L409.7 621.86L417.56 648.22L425.42 671.86L435.25 696.4L445.07 716.4L454.9 732.76L464.72 747.85L474.55 760.94L484.37 771.85L492.23 781.48L497.18 786.57L501.66 787.3" fill="none" stroke="#22a884" stroke-width="1.5" stroke-dasharray="6 4" stroke-linejoin="round"/>
<path d="M287.4 605.5L402.16 605.5L403.69 607.32L409.23 621.86L417.09 648.22L424.95 671.86L434.77 696.4L444.6 716.4L454.42 732.76L464.25 747.85L474.07 760.94L483.9 771.85L491.76 781.48L496.71 786.57L501.19 787.3" fill="none" stroke="#22a884" stroke-width="1.6" stroke-linejoin="round"/>
<path d="M287.4 605.5L355.39 605.5L357.63 607.32L360.58 618.23L366.47 643.68L374.33 681.86L382.19 716.4L390.05 747.3L397.91 771.85L404.16 786.75L406.56 787.3" fill="none" stroke="#414487" stroke-width="1.5" stroke-dasharray="6 4" stroke-linejoin="round"/>
<path d="M287.4 605.5L355.39 605.5L357.16 607.32L360.1 618.23L366 643.68L373.86 681.86L381.72 716.4L389.58 747.3L397.44 771.85L403.69 786.75L406.09 787.3" fill="none" stroke="#414487" stroke-width="1.6" stroke-linejoin="round"/>
<path d="M287.4 605.5L306.26 605.5L309.6 607.32L311.26 609.14L312.36 616.41L315.5 636.41L319.43 658.22L323.36 676.4L327.29 692.76L335.15 721.12L343.01 747.85L350.87 771.85L357.75 786.75L359.52 787.3" fill="none" stroke="#440154" stroke-width="1.5" stroke-dasharray="6 4" stroke-linejoin="round"/>
<path d="M287.4 605.5L306.26 605.5L309.01 607.32L310.67 609.14L311.77 616.41L314.91 636.41L318.84 658.22L322.77 676.4L326.7 692.76L334.56 721.12L342.42 747.85L350.28 771.85L357.16 786.75L358.93 787.3" fill="none" stroke="#440154" stroke-width="1.6" stroke-linejoin="round"/>
</g>
<text x="287.9" y="800" font-size="10.75" fill="#555" text-anchor="middle" font-family="Liberation Sans, sans-serif">0</text>
<text x="327.2" y="800" font-size="10.75" fill="#555" text-anchor="middle" font-family="Liberation Sans, sans-serif">10</text>
<text x="366.5" y="800" font-size="10.75" fill="#555" text-anchor="middle" font-family="Liberation Sans, sans-serif">20</text>
<text x="405.8" y="800" font-size="10.75" fill="#555" text-anchor="middle" font-family="Liberation Sans, sans-serif">30</text>
<text x="445.1" y="800" font-size="10.75" fill="#555" text-anchor="middle" font-family="Liberation Sans, sans-serif">40</text>
<text x="484.4" y="800" font-size="10.75" fill="#555" text-anchor="middle" font-family="Liberation Sans, sans-serif">50</text>
<text x="523.7" y="800" font-size="10.75" fill="#555" text-anchor="middle" font-family="Liberation Sans, sans-serif">60</text>
<text x="283.5" y="790.5" font-size="10.75" fill="#555" text-anchor="end" font-family="Liberation Sans, sans-serif">0</text>
<text x="283.5" y="754.14" font-size="10.75" fill="#555" text-anchor="end" font-family="Liberation Sans, sans-serif">20</text>
<text x="283.5" y="717.78" font-size="10.75" fill="#555" text-anchor="end" font-family="Liberation Sans, sans-serif">40</text>
<text x="283.5" y="681.42" font-size="10.75" fill="#555" text-anchor="end" font-family="Liberation Sans, sans-serif">60</text>
<text x="283.5" y="645.06" font-size="10.75" fill="#555" text-anchor="end" font-family="Liberation Sans, sans-serif">80</text>
<text x="283.5" y="608.7" font-size="10.75" fill="#555" text-anchor="end" font-family="Liberation Sans, sans-serif">100</text>
<text x="407" y="811" font-size="10.75" fill="#555" text-anchor="middle" font-family="Liberation Sans, sans-serif">Dose (Gy)</text>
<text transform="translate(262,702) rotate(-90)" font-size="11" fill="#555" text-anchor="middle" font-family="Liberation Sans, sans-serif">Relative volume (%)</text>
<text x="544.5" y="610.5" font-size="10.75" font-weight="bold" fill="#555" font-family="Liberation Sans, sans-serif">TPS</text>
<text x="585.5" y="610.5" font-size="10.75" font-weight="bold" fill="#555" font-family="Liberation Sans, sans-serif">ThinkQA</text>
<line x1="548.5" y1="625.5" x2="581.5" y2="625.5" stroke="#7ad151" stroke-width="1.5" opacity=".5"/>
<line x1="589.8" y1="625.5" x2="623" y2="625.5" stroke="#7ad151" stroke-width="1.5" stroke-dasharray="2.6 1.6" opacity=".5"/>
<text x="634.8" y="629.5" font-size="10.75" fill="#555" font-family="Liberation Sans, sans-serif">High Dose</text>
<line x1="548.5" y1="649.2" x2="581.5" y2="649.2" stroke="#22a884" stroke-width="1.5" opacity=".5"/>
<line x1="589.8" y1="649.2" x2="623" y2="649.2" stroke="#22a884" stroke-width="1.5" stroke-dasharray="2.6 1.6" opacity=".5"/>
<text x="634.8" y="653.2" font-size="10.75" fill="#555" font-family="Liberation Sans, sans-serif">High Gradient</text>
<line x1="548.5" y1="672.9" x2="581.5" y2="672.9" stroke="#414487" stroke-width="1.5" opacity=".5"/>
<line x1="589.8" y1="672.9" x2="623" y2="672.9" stroke="#414487" stroke-width="1.5" stroke-dasharray="2.6 1.6" opacity=".5"/>
<text x="634.8" y="676.9" font-size="10.75" fill="#555" font-family="Liberation Sans, sans-serif">Mean Dose</text>
<line x1="548.5" y1="696.6" x2="581.5" y2="696.6" stroke="#440154" stroke-width="1.5" opacity=".5"/>
<line x1="589.8" y1="696.6" x2="623" y2="696.6" stroke="#440154" stroke-width="1.5" stroke-dasharray="2.6 1.6" opacity=".5"/>
<text x="634.8" y="700.6" font-size="10.75" fill="#555" font-family="Liberation Sans, sans-serif">Low Dose</text>
<rect x="817.3" y="635.0" width="389.8" height="158" fill="#fff"/>
<line x1="865.4" y1="635.0" x2="865.4" y2="793.0" stroke="#e4e4e4" stroke-width="1"/>
<line x1="967.4" y1="635.0" x2="967.4" y2="793.0" stroke="#e4e4e4" stroke-width="1"/>
<line x1="1069.6" y1="635.0" x2="1069.6" y2="793.0" stroke="#e4e4e4" stroke-width="1"/>
<line x1="1171.8" y1="635.0" x2="1171.8" y2="793.0" stroke="#e4e4e4" stroke-width="1"/>
<line x1="817.3" y1="753.5" x2="1207.1" y2="753.5" stroke="#e4e4e4" stroke-width="1"/>
<line x1="817.3" y1="714" x2="1207.1" y2="714" stroke="#e4e4e4" stroke-width="1"/>
<line x1="817.3" y1="674.5" x2="1207.1" y2="674.5" stroke="#e4e4e4" stroke-width="1"/>
<rect x="817.8" y="705.86" width="13.6" height="8.14" fill="#440154"/>
<rect x="831.4" y="707.05" width="13.6" height="6.95" fill="#414487"/>
<rect x="845" y="708.39" width="13.6" height="5.61" fill="#2a788e"/>
<rect x="858.6" y="705.23" width="13.6" height="8.77" fill="#22a884"/>
<rect x="872.2" y="708.15" width="13.6" height="5.85" fill="#7ad151"/>
<rect x="885.8" y="712.5" width="13.6" height="1.5" fill="#fde725"/>
<rect x="920.2" y="704.99" width="13.6" height="9.01" fill="#440154"/>
<rect x="933.8" y="714" width="13.6" height="1.42" fill="#414487"/>
<rect x="947.4" y="714" width="13.6" height="2.13" fill="#2a788e"/>
<rect x="961" y="714" width="13.6" height="2.53" fill="#22a884"/>
<rect x="974.6" y="714" width="13.6" height="5.21" fill="#7ad151"/>
<rect x="988.2" y="714" width="13.6" height="15.88" fill="#fde725"/>
<rect x="1036" y="714" width="13.6" height="5.53" fill="#414487"/>
<rect x="1049.6" y="714" width="13.6" height="3.48" fill="#2a788e"/>
<rect x="1063.2" y="714" width="13.6" height="8.53" fill="#22a884"/>
<rect x="1076.8" y="714" width="13.6" height="13.11" fill="#7ad151"/>
<rect x="1090.4" y="714" width="13.6" height="26.47" fill="#fde725"/>
<rect x="1124.8" y="709.42" width="13.6" height="4.58" fill="#440154"/>
<rect x="1138.4" y="714" width="13.6" height="16.91" fill="#414487"/>
<rect x="1152" y="714" width="13.6" height="23.23" fill="#2a788e"/>
<rect x="1165.6" y="714" width="13.6" height="36.5" fill="#22a884"/>
<rect x="1179.2" y="714" width="13.6" height="50.96" fill="#7ad151"/>
<rect x="1192.8" y="714" width="13.6" height="79" fill="#fde725"/>
<text transform="translate(828,716.3) rotate(-90)" font-size="10.25" fill="#555" text-anchor="end" font-family="Liberation Sans, sans-serif">1.03</text>
<text transform="translate(841.6,716.3) rotate(-90)" font-size="10.25" fill="#555" text-anchor="end" font-family="Liberation Sans, sans-serif">0.88</text>
<text transform="translate(855.2,716.3) rotate(-90)" font-size="10.25" fill="#555" text-anchor="end" font-family="Liberation Sans, sans-serif">0.71</text>
<text transform="translate(868.8,716.3) rotate(-90)" font-size="10.25" fill="#555" text-anchor="end" font-family="Liberation Sans, sans-serif">1.11</text>
<text transform="translate(882.4,716.3) rotate(-90)" font-size="10.25" fill="#555" text-anchor="end" font-family="Liberation Sans, sans-serif">0.74</text>
<text transform="translate(896,716.3) rotate(-90)" font-size="10.25" fill="#555" text-anchor="end" font-family="Liberation Sans, sans-serif">0.19</text>
<text transform="translate(930.4,716.3) rotate(-90)" font-size="10.25" fill="#555" text-anchor="end" font-family="Liberation Sans, sans-serif">1.14</text>
<text transform="translate(943.3,715) rotate(-90)" font-size="10.25" fill="#555" text-anchor="start" font-family="Liberation Sans, sans-serif">-0.18</text>
<text transform="translate(956.9,715) rotate(-90)" font-size="10.25" fill="#555" text-anchor="start" font-family="Liberation Sans, sans-serif">-0.27</text>
<text transform="translate(970.5,715) rotate(-90)" font-size="10.25" fill="#555" text-anchor="start" font-family="Liberation Sans, sans-serif">-0.32</text>
<text transform="translate(984.1,715) rotate(-90)" font-size="10.25" fill="#555" text-anchor="start" font-family="Liberation Sans, sans-serif">-0.66</text>
<text transform="translate(997.7,715) rotate(-90)" font-size="10.25" fill="#555" text-anchor="start" font-family="Liberation Sans, sans-serif">-2.01</text>
<text transform="translate(1032.6,716.3) rotate(-90)" font-size="10.25" fill="#555" text-anchor="end" font-family="Liberation Sans, sans-serif">0.00</text>
<text transform="translate(1045.5,715) rotate(-90)" font-size="10.25" fill="#555" text-anchor="start" font-family="Liberation Sans, sans-serif">-0.70</text>
<text transform="translate(1059.1,715) rotate(-90)" font-size="10.25" fill="#555" text-anchor="start" font-family="Liberation Sans, sans-serif">-0.44</text>
<text transform="translate(1072.7,715) rotate(-90)" font-size="10.25" fill="#555" text-anchor="start" font-family="Liberation Sans, sans-serif">-1.08</text>
<text transform="translate(1086.3,715) rotate(-90)" font-size="10.25" fill="#555" text-anchor="start" font-family="Liberation Sans, sans-serif">-1.66</text>
<text transform="translate(1099.9,715) rotate(-90)" font-size="10.25" fill="#555" text-anchor="start" font-family="Liberation Sans, sans-serif">-3.35</text>
<text transform="translate(1135,716.3) rotate(-90)" font-size="10.25" fill="#555" text-anchor="end" font-family="Liberation Sans, sans-serif">0.58</text>
<text transform="translate(1147.9,715) rotate(-90)" font-size="10.25" fill="#555" text-anchor="start" font-family="Liberation Sans, sans-serif">-2.14</text>
<text transform="translate(1161.5,715) rotate(-90)" font-size="10.25" fill="#555" text-anchor="start" font-family="Liberation Sans, sans-serif">-2.94</text>
<text transform="translate(1175.1,715) rotate(-90)" font-size="10.25" fill="#555" text-anchor="start" font-family="Liberation Sans, sans-serif">-4.62</text>
<text transform="translate(1188.7,715) rotate(-90)" font-size="10.25" fill="#555" text-anchor="start" font-family="Liberation Sans, sans-serif">-6.45</text>
<text transform="translate(1202.3,716.8) rotate(-90)" font-size="10.25" fill="#555" text-anchor="start" font-family="Liberation Sans, sans-serif">-10.00</text>
<rect x="817.3" y="635.0" width="389.8" height="158" fill="none" stroke="#6a6a6a" stroke-width="2"/>
<text x="814" y="638.6" font-size="10.75" fill="#555" text-anchor="end" font-family="Liberation Sans, sans-serif">10</text>
<text x="814" y="678.1" font-size="10.75" fill="#555" text-anchor="end" font-family="Liberation Sans, sans-serif">5</text>
<text x="814" y="717.6" font-size="10.75" fill="#555" text-anchor="end" font-family="Liberation Sans, sans-serif">0</text>
<text x="814" y="757.1" font-size="10.75" fill="#555" text-anchor="end" font-family="Liberation Sans, sans-serif">-5</text>
<text x="814" y="796.6" font-size="10.75" fill="#555" text-anchor="end" font-family="Liberation Sans, sans-serif">-10</text>
<text x="865.4" y="807.5" font-size="10.75" fill="#555" text-anchor="middle" font-family="Liberation Sans, sans-serif">High Dose</text>
<text x="967.4" y="807.5" font-size="10.75" fill="#555" text-anchor="middle" font-family="Liberation Sans, sans-serif">High Gradient</text>
<text x="1069.6" y="807.5" font-size="10.75" fill="#555" text-anchor="middle" font-family="Liberation Sans, sans-serif">Mean Dose</text>
<text x="1171.8" y="807.5" font-size="10.75" fill="#555" text-anchor="middle" font-family="Liberation Sans, sans-serif">Low Dose</text>
<text transform="translate(792,722) rotate(-90)" font-size="11" fill="#555" text-anchor="middle" font-family="Liberation Sans, sans-serif">Relative deviation (%)</text>
<rect x="830.8" y="606.8" width="10.4" height="10.4" fill="#440154" opacity=".25"/><rect x="832.2" y="608.2" width="7.6" height="7.6" fill="#440154"/>
<text x="849.5" y="619" font-size="10.75" fill="#555" font-family="Liberation Sans, sans-serif">D<tspan dy="2.5" font-size="8">2%</tspan></text>
<rect x="878.3" y="606.8" width="10.4" height="10.4" fill="#414487" opacity=".25"/><rect x="879.7" y="608.2" width="7.6" height="7.6" fill="#414487"/>
<text x="897.0" y="619" font-size="10.75" fill="#555" font-family="Liberation Sans, sans-serif">D<tspan dy="2.5" font-size="8">mean</tspan></text>
<rect x="932.8" y="606.8" width="10.4" height="10.4" fill="#2a788e" opacity=".25"/><rect x="934.2" y="608.2" width="7.6" height="7.6" fill="#2a788e"/>
<text x="951.5" y="619" font-size="10.75" fill="#555" font-family="Liberation Sans, sans-serif">D<tspan dy="2.5" font-size="8">50%</tspan></text>
<rect x="984.3" y="606.8" width="10.4" height="10.4" fill="#22a884" opacity=".25"/><rect x="985.7" y="608.2" width="7.6" height="7.6" fill="#22a884"/>
<text x="1003.0" y="619" font-size="10.75" fill="#555" font-family="Liberation Sans, sans-serif">D<tspan dy="2.5" font-size="8">90%</tspan></text>
<rect x="1035.8" y="606.8" width="10.4" height="10.4" fill="#7ad151" opacity=".25"/><rect x="1037.2" y="608.2" width="7.6" height="7.6" fill="#7ad151"/>
<text x="1054.5" y="619" font-size="10.75" fill="#555" font-family="Liberation Sans, sans-serif">D<tspan dy="2.5" font-size="8">95%</tspan></text>
<rect x="1087.3" y="606.8" width="10.4" height="10.4" fill="#fde725" opacity=".25"/><rect x="1088.7" y="608.2" width="7.6" height="7.6" fill="#fde725"/>
<text x="1106.0" y="619" font-size="10.75" fill="#555" font-family="Liberation Sans, sans-serif">D<tspan dy="2.5" font-size="8">98%</tspan></text>
</svg>
<div class="abs" style="left:0;top:747px;width:1272px;height:1px;background:rgba(40,50,60,.22)"></div>
</body>
</html>
